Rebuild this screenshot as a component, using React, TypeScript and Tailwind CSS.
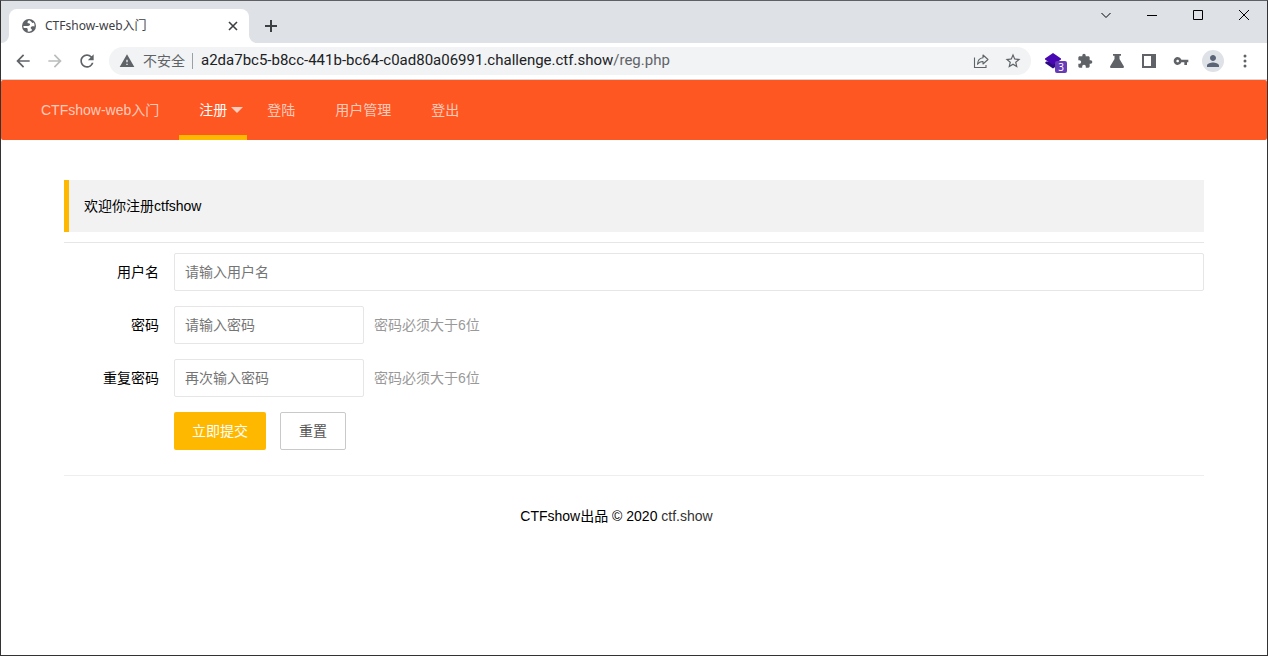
import type { ReactNode } from "react";
import {
  MdArrowBack,
  MdArrowForward,
  MdExtension,
  MdPerson,
  MdRefresh,
  MdStarBorder,
  MdVpnKey,
  MdWarning,
} from "react-icons/md";

interface NavItem {
  label: string;
  active?: boolean;
}

const NAV_ITEMS: NavItem[] = [
  { label: "注册", active: true },
  { label: "登陆" },
  { label: "用户管理" },
  { label: "登出" },
];

export default function App() {
  return (
    <div className="flex min-h-screen flex-col border border-[#333333] border-t-[#5f6063] bg-white">
      <TabStrip />
      <Toolbar />
      <div className="flex-1 font-['Liberation_Sans','Noto_Sans_CJK_SC',sans-serif] text-sm text-black">
        <SiteNav />
        <main className="mx-auto max-w-[1170px] px-[15px] pt-10">
          <blockquote className="mb-2.5 border-l-[5px] border-[#ffb800] bg-[#f2f2f2] p-[15px] leading-[22px]">
            欢迎你注册ctfshow
          </blockquote>
          <hr className="mb-2.5 border-[#e6e6e6]" />
          <RegisterForm />
          <hr className="mt-[25px] border-[#eeeeee]" />
          <footer className="pt-[29px] pr-[35px] text-center leading-[22px]">
            CTFshow出品 © 2020{" "}
            <a href="#home" className="text-[#333333]">
              ctf.show
            </a>
          </footer>
        </main>
      </div>
    </div>
  );
}

function TabStrip() {
  return (
    <div className="flex h-[42px] items-start justify-between bg-[#dee1e6] font-['Noto_Sans','Noto_Sans_CJK_SC',sans-serif]">
      <div className="flex items-center self-end">
        <TabFoot />
        <div className="flex h-[34px] w-60 items-center rounded-t-lg bg-white pr-2 pl-3 text-xs text-[#3c4043]">
          <svg viewBox="0 0 16 16" className="size-4">
            <circle cx="8" cy="8" r="7" fill="#5f6368" />
            <path
              d="M8.200 2.300c-.9.300-1.700 1.200-1.700 2.200 0 .8.800.9 1.500.9.900 0 1.200.6 1 1.400-.2.900-1 .9-1.800 1.100H2.400c0 .8.100 1.500.5 2.200h2.300c1 0 1.500.6 1.500 1.400v2c1.500.4 3 0 4.200-.9.200-.9-.1-1.500-.8-1.900-.7-.5-.5-1.500.2-1.900.9-.5 1.800-.5 3.200-.4.200-1.400 0-2.700-.7-3.900-.8.600-1.700.5-2.100-.2-.4-.8-1.400-1.500-2.500-2z"
              fill="#fff"
            />
          </svg>
          <span className="ml-2 flex-1">CTFshow-web入门</span>
          <button type="button" aria-label="Close tab" className="flex size-4 items-center justify-center">
            <svg viewBox="0 0 8 8" className="size-2 overflow-visible" stroke="currentColor" strokeWidth="1.6">
              <path d="M0 0l8 8M8 0L0 8" />
            </svg>
          </button>
        </div>
        <TabFoot flipped />
        <button type="button" aria-label="New tab" className="ml-1 flex size-5 items-center justify-center text-[#3c4043]">
          <svg viewBox="0 0 12 12" className="size-3" stroke="currentColor" strokeWidth="2">
            <path d="M6 0v12M0 6h12" />
          </svg>
        </button>
      </div>

      <div className="flex text-black">
        <WindowButton label="Search tabs">
          <path d="M0.5 3l4.5 4.5L9.5 3" />
        </WindowButton>
        <WindowButton label="Minimize">
          <path d="M0 5.5h10" />
        </WindowButton>
        <WindowButton label="Maximize">
          <path d="M0.5 0.5h9v9h-9z" />
        </WindowButton>
        <WindowButton label="Close">
          <path d="M0 0l10 10M10 0L0 10" />
        </WindowButton>
      </div>
    </div>
  );
}

function TabFoot({ flipped }: { flipped?: boolean }) {
  return (
    <svg viewBox="0 0 8 8" className={`size-2 self-end ${flipped ? "-scale-x-100" : ""}`} fill="#fff">
      <path d="M8 0v8H0a8 8 0 0 0 8-8z" />
    </svg>
  );
}

function WindowButton({ label, children }: { label: string; children: ReactNode }) {
  return (
    <button type="button" aria-label={label} className="flex h-7 w-[46px] items-center justify-center">
      <svg viewBox="0 0 10 10" className="size-2.5 overflow-visible" fill="none" stroke="currentColor">
        {children}
      </svg>
    </button>
  );
}

function Toolbar() {
  return (
    <div className="flex h-[37px] items-center border-b border-[#d5d7da] px-1.5 font-['Noto_Sans','Noto_Sans_CJK_SC',sans-serif] text-[#5f6368]">
      <IconButton label="Back">
        <MdArrowBack className="size-5" />
      </IconButton>
      <IconButton label="Forward">
        <MdArrowForward className="size-5 text-[#babcbe]" />
      </IconButton>
      <IconButton label="Reload">
        <MdRefresh className="size-5" />
      </IconButton>

      <div className="ml-1.5 flex h-7 min-w-0 flex-1 items-center rounded-full bg-[#f1f3f4] pr-0.5 pl-2.5 text-sm">
        <MdWarning className="size-4" />
        <span className="ml-2 whitespace-nowrap">不安全</span>
        <span className="mr-2 ml-[7px] h-4 w-px bg-[#9aa0a6]" />
        <div
          role="textbox"
          aria-label="Address"
          className="min-w-0 flex-1 truncate font-['Roboto','Noto_Sans',sans-serif] text-[15px]"
        >
          <span className="text-[#202124]">a2da7bc5-b8cc-441b-bc64-c0ad80a06991.challenge.ctf.show</span>
          /reg.php
        </div>
        <IconButton label="Share">
          <svg viewBox="0 0 16 16" className="size-4" fill="none" stroke="currentColor" strokeWidth="1.1">
            <path d="M1.500 4.500v10h11.500v-2.500" />
            <path d="M10 2l5 4.500-5 4.500V8.500C7.500 8.400 5.800 9.300 4.500 11.300c.2-3.600 2-6.300 5.500-6.600z" strokeLinejoin="round" />
          </svg>
        </IconButton>
        <IconButton label="Bookmark">
          <MdStarBorder className="size-[18px]" />
        </IconButton>
      </div>

      <div className="ml-1.5 flex items-center">
        <IconButton label="Extension with 3 notices">
          <span className="relative">
            <svg viewBox="0 0 16 16" className="size-4">
              <path d="M1 8.500L0 10l8 5.500 8-5.500-1-1.500z" fill="#2b0a80" />
              <path d="M8 0l8 5.500v1L8 12 0 6.500v-1z" fill="#4708b3" />
            </svg>
            <span className="absolute top-2 left-2.5 flex h-3 w-3 items-center justify-center rounded-xs bg-[#673ab7] text-[10px] leading-3 text-white">
              3
            </span>
          </span>
        </IconButton>
        <IconButton label="Extensions">
          <MdExtension className="size-4" />
        </IconButton>
        <IconButton label="Labs">
          <svg viewBox="0 0 16 16" className="size-4" fill="currentColor">
            <path d="M4 1h8v1.700h-1.500V6l4.300 7.300c.5.900 0 1.700-.9 1.700H2.100c-.9 0-1.400-.8-.9-1.700L5.500 6V2.700H4z" />
          </svg>
        </IconButton>
        <IconButton label="Side panel">
          <svg viewBox="0 0 14 14" className="size-3.5" fill="currentColor">
            <path fillRule="evenodd" d="M0 0h14v14H0zM2 2v10h7V2z" />
          </svg>
        </IconButton>
        <IconButton label="Passwords">
          <MdVpnKey className="size-4" />
        </IconButton>
        <IconButton label="Profile">
          <span className="flex size-[22px] items-center justify-center rounded-full bg-[#dee1e6] text-[#5a6478]">
            <MdPerson className="size-[18px]" />
          </span>
        </IconButton>
        <IconButton label="Menu">
          <svg viewBox="0 0 4 14" className="h-3.5 w-1" fill="currentColor">
            <circle cx="2" cy="2" r="1.500" />
            <circle cx="2" cy="7" r="1.500" />
            <circle cx="2" cy="12" r="1.500" />
          </svg>
        </IconButton>
      </div>
    </div>
  );
}

function IconButton({ label, children }: { label: string; children: ReactNode }) {
  return (
    <button type="button" aria-label={label} className="flex h-7 w-8 shrink-0 items-center justify-center">
      {children}
    </button>
  );
}

function SiteNav() {
  return (
    <nav className="flex h-[60px] items-stretch rounded-xs bg-[#ff5722] px-5 leading-[60px] text-white/70">
      <a href="#home" className="px-5">
        CTFshow-web入门
      </a>
      {NAV_ITEMS.map((item) =>
        item.active ? (
          <a
            key={item.label}
            href="#register"
            className="flex items-center border-b-[5px] border-[#ffb800] pr-1 pl-5 text-white"
          >
            <span className="h-[60px] self-start">{item.label}</span>
            <svg viewBox="0 0 12 6" className="mt-1 ml-1 h-1.5 w-3" fill="#fff" fillOpacity="0.7">
              <path d="M0 0h12L6 6z" />
            </svg>
          </a>
        ) : (
          <a key={item.label} href="#nav" className="px-5">
            {item.label}
          </a>
        )
      )}
    </nav>
  );
}

function RegisterForm() {
  return (
    <form className="flex flex-col gap-[15px]">
      <Field id="username" label="用户名" placeholder="请输入用户名" />
      <Field id="password" label="密码" placeholder="请输入密码" hint="密码必须大于6位" />
      <Field id="confirm" label="重复密码" placeholder="再次输入密码" hint="密码必须大于6位" />
      <div className="flex gap-3.5 pl-[110px]">
        <button type="submit" className="h-[38px] rounded-xs bg-[#ffb800] px-[18px] text-white">
          立即提交
        </button>
        <button type="reset" className="h-[38px] rounded-xs border border-[#c9c9c9] px-[18px] text-[#555555]">
          重置
        </button>
      </div>
    </form>
  );
}

function Field({
  id,
  label,
  placeholder,
  hint,
}: {
  id: string;
  label: string;
  placeholder: string;
  hint?: string;
}) {
  return (
    <div className="flex items-center">
      <label htmlFor={id} className="w-[110px] shrink-0 pr-[15px] text-right">
        {label}
      </label>
      <input
        id={id}
        type={hint ? "password" : "text"}
        placeholder={placeholder}
        className={`h-[38px] rounded-xs border border-[#e6e6e6] px-2.5 placeholder:text-[#757575] ${
          hint ? "w-[190px]" : "min-w-0 flex-1"
        }`}
      />
      {hint && <span className="ml-2.5 text-[#999999]">{hint}</span>}
    </div>
  );
}
